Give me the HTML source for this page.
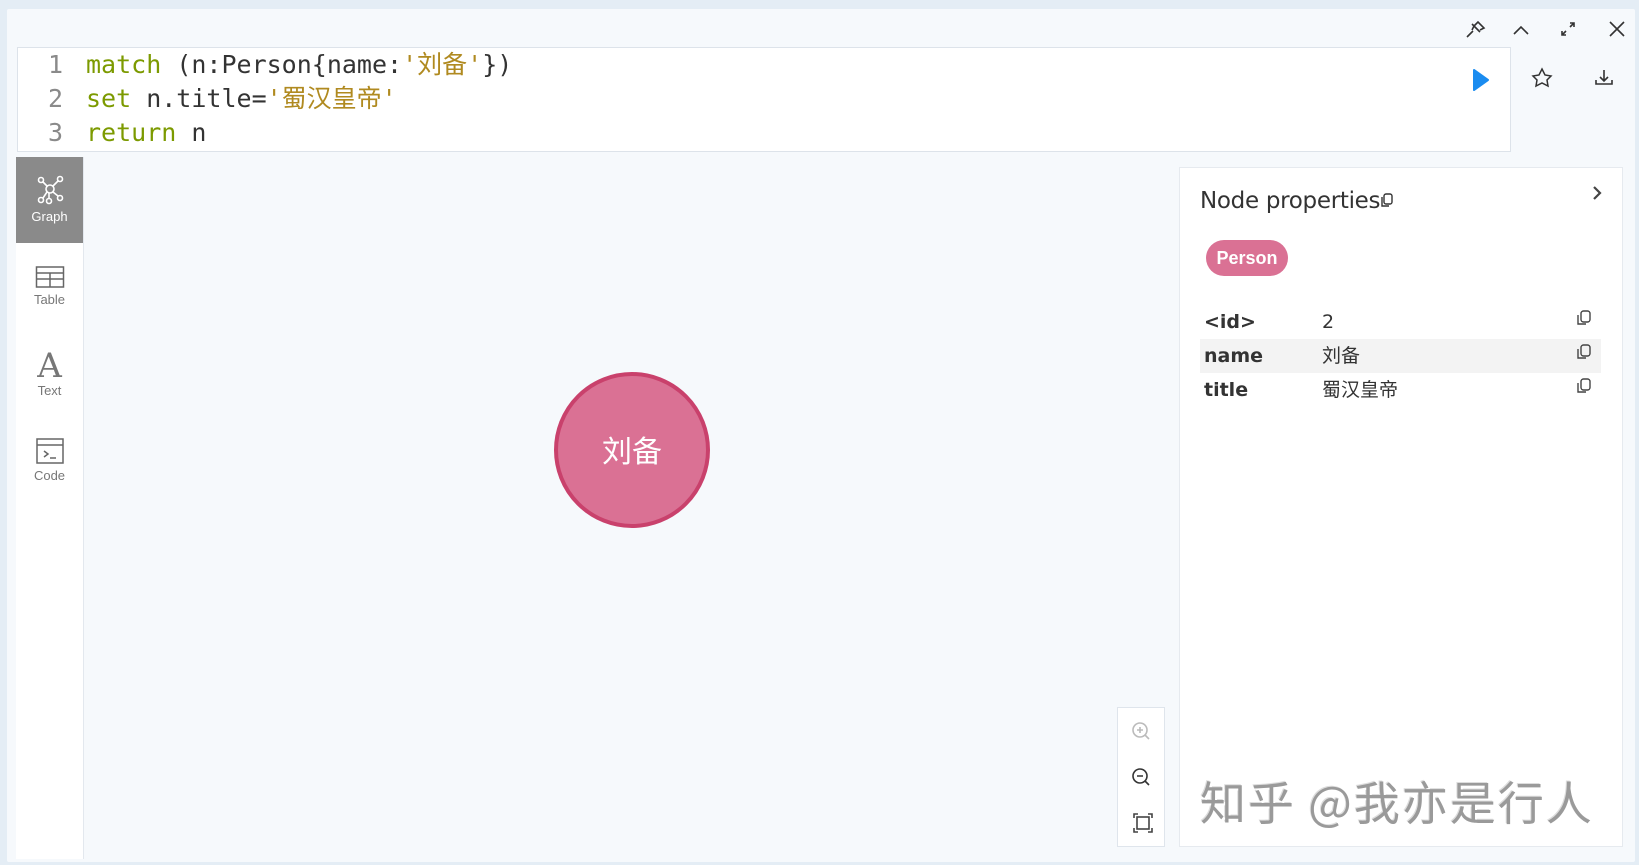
<!DOCTYPE html>
<html><head><meta charset="utf-8"><style>
*{margin:0;padding:0;box-sizing:border-box}
body{width:1639px;height:865px;background:#e4edf5;position:relative;overflow:hidden;font-family:"Liberation Sans","Noto Sans CJK SC",sans-serif}
.frame{position:absolute;left:7px;top:9px;width:1628px;height:853px;background:#f6f9fc;border-radius:2px}
.ed{position:absolute;left:17px;top:47px;width:1494px;height:105px;background:#fff;border:1px solid #dde3ea;font-family:"DejaVu Sans Mono","Noto Sans CJK SC",monospace;font-size:25px}
.ln{position:absolute;left:30px;color:#8a8a8a;line-height:34px}
.cd{position:absolute;left:68px;color:#333;white-space:pre;line-height:34px}
.k{color:#7c9a00}.s{color:#b08a20}
.side{position:absolute;left:16px;top:157px;width:68px;height:702px;background:#fff;border-right:1px solid #e3e8ee}
.sb{position:absolute;left:0;width:67px;text-align:center;font-size:13px;color:#777}
.gbtn{top:0;height:86px;background:#8a8a8a;color:#fff}
.props{position:absolute;left:1179px;top:167px;width:444px;height:680px;background:#fff;border:1px solid #e6eaef}
.zc{position:absolute;left:1117px;top:707px;width:48px;height:140px;background:#fff;border:1px solid #dfe5ec}
.row{position:absolute;left:20px;width:401px;height:34px;font-size:19px;line-height:34px;font-family:"DejaVu Sans","Noto Sans CJK SC",sans-serif}
.row b{position:absolute;left:4px;top:0;color:#333}
.row span{position:absolute;left:122px;top:0;color:#333}
.cp{position:absolute;left:376px;top:4px}
</style></head><body>
<div class="frame"></div>
<div class="ed">
<div class="ln" style="top:0">1</div><div class="cd" style="top:0"><span class="k">match</span> (n:Person{name:<span class="s">'刘备'</span>})</div>
<div class="ln" style="top:34px">2</div><div class="cd" style="top:34px"><span class="k">set</span> n.title=<span class="s">'蜀汉皇帝'</span></div>
<div class="ln" style="top:68px">3</div><div class="cd" style="top:68px"><span class="k">return</span> n</div>
</div>
<svg style="position:absolute;left:0;top:0" width="1639" height="865" fill="none" stroke="#333" stroke-width="1.6">
<path d="M1467 37 L1473 31 M1472 24 L1480 32 M1474 26 L1478 22 L1484 28 L1480 30 M1474 26 L1472 30"/>
<path d="M1514 34 L1521 27 L1528 34"/>
<path d="M1562 35 L1566 31 M1562 31 V35 H1566 M1574 23 L1570 27 M1570 23 H1574 V27"/>
<path d="M1610 22 L1624 36 M1624 22 L1610 36"/>
<path d="M1474 70 L1488 80 L1474 90 Z" fill="#1a8cf0" stroke="#1a8cf0" stroke-linejoin="round" stroke-width="2"/>
<path d="M1542 69 L1545 75 L1551 76 L1547 80 L1548 86 L1542 83 L1536 86 L1537 80 L1533 76 L1539 75 Z" stroke-width="1.5"/>
<path d="M1604 70 V81 M1600 77 L1604 81 L1608 77 M1596 80 V84 H1612 V80"/>
</svg>
<div class="side">
<div class="sb gbtn"><svg width="34" height="34" viewBox="0 0 34 34" style="margin-top:16px" fill="none" stroke="#fff" stroke-width="1.6"><circle cx="17" cy="16" r="4"/><circle cx="8" cy="7" r="2.5"/><circle cx="27" cy="6" r="2.5"/><circle cx="27" cy="25" r="2.5"/><circle cx="8" cy="27" r="2.5"/><circle cx="16" cy="28" r="2.5"/><path d="M10 9 L14 13 M25 8 L20 13 M25 23 L20 19 M10 25 L14 19 M16 20 V25"/></svg><div style="margin-top:-1px">Graph</div></div>
<div class="sb" style="top:108px"><svg width="30" height="24" fill="none" stroke="#666" stroke-width="1.5"><rect x="1.5" y="2" width="27" height="20"/><path d="M1.5 8 H28.5 M1.5 14 H28.5 M15 8 V22"/></svg><div>Table</div></div>
<div class="sb" style="top:192px"><div style="font-family:'DejaVu Serif',serif;font-weight:300;font-size:34px;color:#777;line-height:34px">A</div><div>Text</div></div>
<div class="sb" style="top:280px"><svg width="30" height="28" fill="none" stroke="#666" stroke-width="1.5"><rect x="2" y="2" width="26" height="24"/><path d="M2 8 H28 M9 14 L13 17 L9 20 M15 21 H21"/></svg><div>Code</div></div>
</div>
<svg style="position:absolute;left:552px;top:372px" width="160" height="160"><circle cx="80" cy="78" r="76" fill="#da7194" stroke="#c9416c" stroke-width="4"/><text x="80" y="90" text-anchor="middle" fill="#fff" font-size="30" font-family="Noto Sans CJK SC,sans-serif">刘备</text></svg>
<div class="props">
<div style="position:absolute;left:20px;top:20px;font-size:23px;color:#333;font-family:'DejaVu Sans',sans-serif;letter-spacing:-0.3px">Node properties<svg width="14" height="16" fill="none" stroke="#333" stroke-width="1.4"><rect x="4" y="2" width="8" height="10" rx="2"/><path d="M2 5 V14 H9"/></svg></div>
<svg style="position:absolute;left:410px;top:16px" width="14" height="18" fill="none" stroke="#444" stroke-width="2.2"><path d="M4 3 L10 9 L4 15"/></svg>
<div style="position:absolute;left:26px;top:72px;width:82px;height:36px;border-radius:18px;background:#da7194;color:#fff;font-weight:bold;font-size:18px;text-align:center;line-height:36px">Person</div>
<div class="row" style="top:137px"><b>&lt;id&gt;</b><span>2</span><svg class="cp" width="16" height="18" fill="none" stroke="#444" stroke-width="1.4"><rect x="5" y="2" width="9" height="11" rx="2.5"/><path d="M2 6 V15 H10"/></svg></div>
<div class="row" style="top:171px;background:#f3f3f3"><b>name</b><span>刘备</span><svg class="cp" width="16" height="18" fill="none" stroke="#444" stroke-width="1.4"><rect x="5" y="2" width="9" height="11" rx="2.5"/><path d="M2 6 V15 H10"/></svg></div>
<div class="row" style="top:205px"><b>title</b><span>蜀汉皇帝</span><svg class="cp" width="16" height="18" fill="none" stroke="#444" stroke-width="1.4"><rect x="5" y="2" width="9" height="11" rx="2.5"/><path d="M2 6 V15 H10"/></svg></div>
<div style="position:absolute;left:20px;top:600px;font-size:46px;color:#9a9a9a;font-family:'Noto Sans CJK SC',sans-serif;text-shadow:2px 2px 0 #fff,-1px -1px 0 #ddd;white-space:nowrap;letter-spacing:2px">知乎 @我亦是行人</div>
</div>
<div class="zc">
<svg width="48" height="140" fill="none" stroke-width="1.6"><g stroke="#bbb"><circle cx="22" cy="22" r="7"/><path d="M27 27 L31 31 M19 22 H25 M22 19 V25"/></g><g stroke="#333"><circle cx="22" cy="68" r="7"/><path d="M27 73 L31 77 M19 68 H25"/></g><g stroke="#444"><rect x="19" y="109" width="12" height="12"/><path d="M16 110 V106 H20 M30 106 H34 V110 M34 120 V124 H30 M20 124 H16 V120"/></g></svg>
</div>
</body></html>
